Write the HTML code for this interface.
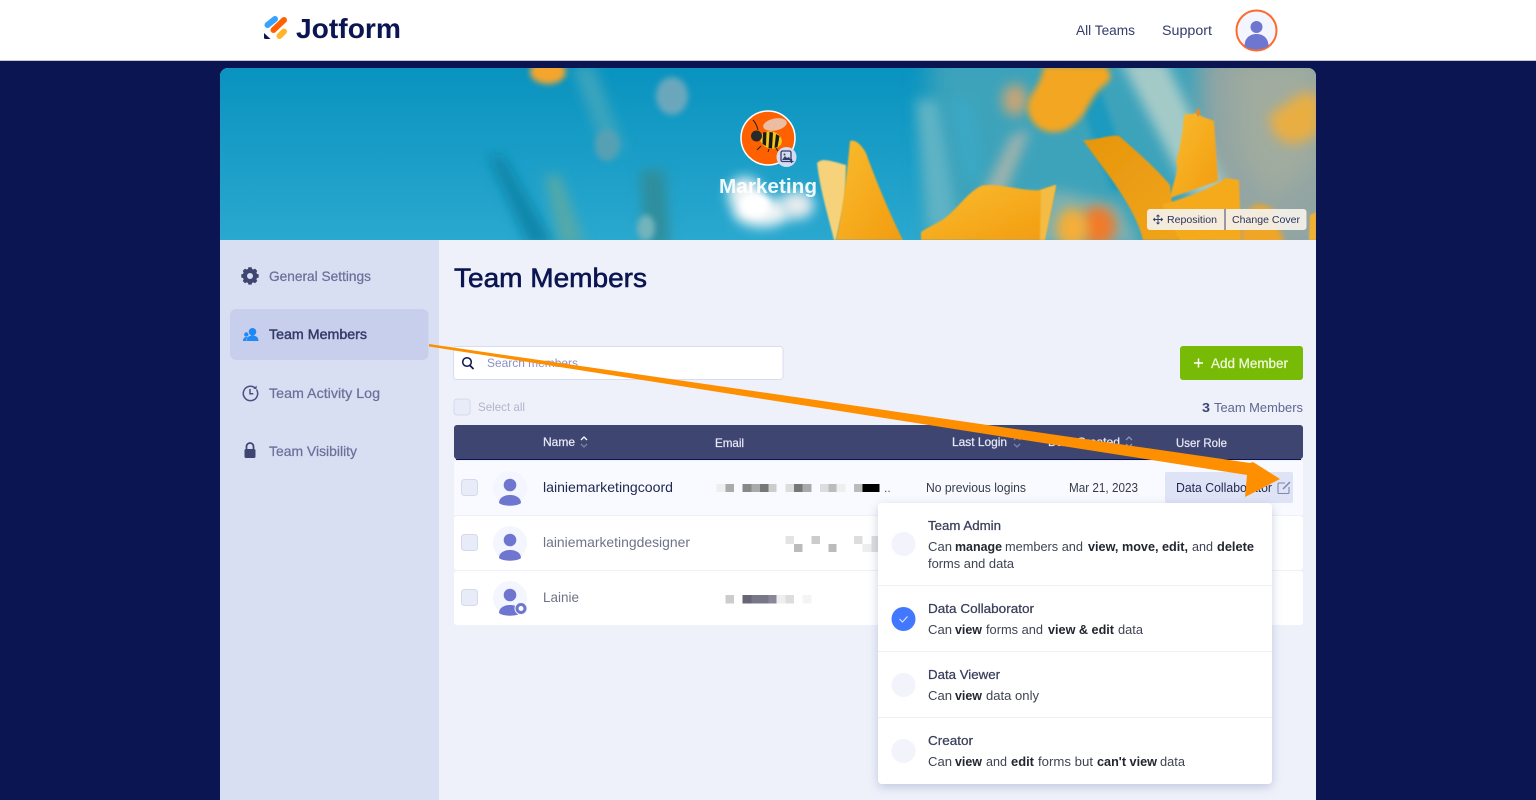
<!DOCTYPE html>
<html lang="en"><head><meta charset="utf-8"><title>Team Members</title>
<style>
html,body{margin:0;padding:0;width:1536px;height:800px;overflow:hidden;background:#0a1551}
svg{display:block;filter:blur(.35px)}
text{font-family:"Liberation Sans",sans-serif;white-space:pre}
.m{stroke-width:.25px}
.b{font-weight:700}
</style></head><body>
<svg xmlns="http://www.w3.org/2000/svg" width="1536" height="800" viewBox="0 0 1536 800">
<defs>
<clipPath id="cv"><path d="M220 240V76a8 8 0 0 1 8-8H1308a8 8 0 0 1 8 8V240Z"/></clipPath>
<filter id="b12" x="-50%" y="-50%" width="200%" height="200%"><feGaussianBlur stdDeviation="12"/></filter>
<filter id="b6" x="-50%" y="-50%" width="200%" height="200%"><feGaussianBlur stdDeviation="6"/></filter>
<filter id="b3" x="-50%" y="-50%" width="200%" height="200%"><feGaussianBlur stdDeviation="3"/></filter>
<filter id="b1" x="-20%" y="-20%" width="140%" height="140%"><feGaussianBlur stdDeviation=".8"/></filter>
<filter id="sh" x="-10%" y="-10%" width="120%" height="125%"><feDropShadow dx="0" dy="3" stdDeviation="5" flood-color="#6b74a8" flood-opacity=".35"/></filter>
<linearGradient id="bg" x1="0" y1="0" x2="0" y2="1"><stop offset="0" stop-color="#0993bf"/><stop offset="1" stop-color="#2aa8cf"/></linearGradient>
<linearGradient id="p1" x1="0" y1="0" x2="1" y2="1"><stop offset="0" stop-color="#f9bb2e"/><stop offset="1" stop-color="#f29c0f"/></linearGradient>
<linearGradient id="p2" x1="0" y1="0" x2="1" y2="1"><stop offset="0" stop-color="#e6960f"/><stop offset="1" stop-color="#f2a516"/></linearGradient>
</defs>

<!-- page -->
<rect width="1536" height="800" fill="#0a1551"/>
<rect width="1536" height="60" fill="#fff"/>
<rect y="60" width="1536" height="1" fill="#c5c7d4"/>

<!-- logo -->
<g stroke-linecap="round" fill="none">
<path d="M267.500 25 275 19" stroke="#38a3ff" stroke-width="6"/>
<path d="M273.500 30 284 20" stroke="#ff6100" stroke-width="6"/>
<path d="M279.500 36 284 31.500" stroke="#ffb629" stroke-width="6"/>
</g>
<path d="M264 33 270.500 39H265.500a1.500 1.500 0 0 1-1.500-1.500Z" fill="#0a1551"/>
<text x="296" y="38" font-size="28" class="b" fill="#0a1551" textLength="105" lengthAdjust="spacingAndGlyphs">Jotform</text>

<text x="1076" y="35" font-size="13.500" fill="#343c6a" textLength="59" lengthAdjust="spacingAndGlyphs">All Teams</text>
<text x="1162" y="35" font-size="13.500" fill="#343c6a" textLength="50" lengthAdjust="spacingAndGlyphs">Support</text>
<circle cx="1256.500" cy="30.500" r="20" fill="#f3f6ff" stroke="#ff6a2b" stroke-width="2"/>
<circle cx="1256.500" cy="27" r="6" fill="#6f76cf"/>
<path d="M1244.500 46c0-8 5.500-12 12-12s12 4 12 12c-3 2.500-7.500 3.500-12 3.500s-9-1-12-3.500Z" fill="#6f76cf"/>

<!-- panel -->
<path d="M220 800V76a8 8 0 0 1 8-8H1308a8 8 0 0 1 8 8V800Z" fill="#eef1fa"/>
<rect x="220" y="240" width="219" height="560" fill="#d9dff3"/>

<!-- cover -->
<g clip-path="url(#cv)">
<rect x="220" y="68" width="1096" height="172" fill="url(#bg)"/>
<rect x="930" y="50" width="420" height="210" fill="#3ea3bb" filter="url(#b12)"/>
<rect x="1200" y="50" width="140" height="210" fill="#93a5a3" filter="url(#b12)"/>
<path d="M1120 60 1165 60 1230 195 1190 195Z" fill="#a4cac8" filter="url(#b6)"/>
<path d="M1065 60 1090 60 1135 190 1112 190Z" fill="#1d9abf" filter="url(#b3)"/>
<path d="M1235 60 1316 60 1316 160 1270 200 1240 150Z" fill="#a0ac9f" filter="url(#b12)"/>
<path d="M916 100 938 100 958 230 928 230Z" fill="#5fb3c4" filter="url(#b6)"/>
<path d="M952 100 970 100 982 180 965 180Z" fill="#3ba9c6" filter="url(#b6)"/>
<path d="M1012 135 1030 130 1000 205 972 215Z" fill="#9fb3ad" filter="url(#b6)"/>
<path d="M985 215 1060 190 1120 205 1140 245H985Z" fill="#7ab0b2" filter="url(#b6)"/>
<ellipse cx="1015" cy="100" rx="13" ry="16" fill="#c3a578" filter="url(#b6)"/>
<!-- blurred left stems -->
<ellipse cx="548" cy="72" rx="18" ry="12" fill="#f4a52e" filter="url(#b3)"/>
<ellipse cx="672" cy="96" rx="16" ry="19" fill="#6aa7bd" filter="url(#b3)"/>
<path d="M572 66 594 66 625 150 605 155Z" fill="#3ba4bd" filter="url(#b6)"/>
<ellipse cx="607" cy="145" rx="12" ry="16" fill="#57a0b3" filter="url(#b3)"/>
<path d="M488 155 503 155 555 245 528 245Z" fill="#1086aa" filter="url(#b6)"/>
<path d="M545 175 560 175 585 245 560 245Z" fill="#54a9a9" filter="url(#b6)"/>
<path d="M640 170 665 170 670 245 645 245Z" fill="#2e8e9c" filter="url(#b6)"/>
<ellipse cx="646" cy="228" rx="9" ry="13" fill="#72b4bc" filter="url(#b3)"/>
<!-- white blossom -->
<ellipse cx="745" cy="195" rx="17" ry="18" fill="#eef3f3" filter="url(#b6)"/>
<ellipse cx="762" cy="212" rx="28" ry="15" fill="#f2f5f5" filter="url(#b6)"/>
<ellipse cx="797" cy="205" rx="17" ry="14" fill="#e6ecee" filter="url(#b6)"/>
<ellipse cx="755" cy="205" rx="15" ry="12" fill="#fff" filter="url(#b3)"/>
<!-- top blurred flower -->
<path d="M1028 105C1030 92 1040 88 1044 66H1105C1112 72 1112 80 1106 84 1095 92 1090 105 1085 112 1075 128 1060 134 1050 132 1036 130 1027 118 1028 105Z" fill="#f3a622" filter="url(#b3)"/>
<!-- far right blurred -->
<path d="M1271 113C1285 108 1295 92 1312 92L1320 100V130C1310 140 1300 145 1288 143 1275 140 1268 125 1271 113Z" fill="#e9ae42" filter="url(#b6)"/>
<ellipse cx="1098" cy="226" rx="18" ry="20" fill="#f07a2a" filter="url(#b6)"/>
<ellipse cx="1072" cy="228" rx="16" ry="20" fill="#f5ae38" filter="url(#b6)"/>
<!-- left petals -->
<path d="M817 163C822 158 828 160 846 165L845 200 836 240H834C828 215 820 190 817 163Z" fill="#f6d27a" filter="url(#b1)"/>
<path d="M850 141C856 139 862 146 866 153 875 178 890 215 903 240H836C842 215 847 175 850 141Z" fill="url(#p1)" filter="url(#b1)"/>
<!-- middle flower -->
<path d="M921 232C930 226 940 222 945 218 958 208 968 192 981 186 995 182 1025 192 1040 190L1056 185 1052 205 1044 240H921Z" fill="url(#p1)" filter="url(#b1)"/>
<path d="M1041 190 1056 185 1052 205 1045 240H1040Z" fill="#f4bc44" filter="url(#b1)"/>
<!-- right flower -->
<path d="M1083 140C1095 141 1110 134 1119 136 1135 150 1158 170 1170 185L1172 205 1198 240H1143C1135 205 1100 165 1083 140Z" fill="url(#p2)" filter="url(#b1)"/>
<path d="M1184 115C1188 113 1192 115 1196 113 1203 118 1208 118 1214 121L1218 181 1170 198C1172 185 1180 170 1176 161 1180 150 1183 130 1184 115Z" fill="url(#p1)" filter="url(#b1)"/>
<path d="M1196 113 1197 108 1201 112 1198 117Z" fill="#e98a2a"/>
<path d="M1162 205C1175 200 1200 195 1226 178L1239 180 1241 240H1180Z" fill="#f5aa1c" filter="url(#b1)"/>
<path d="M1241 215 1258 204 1272 208 1285 245H1241Z" fill="#f0a528" filter="url(#b3)"/>
<path d="M1310 215 1316 212V240H1309Z" fill="#f3b02e" filter="url(#b1)"/>
</g>

<!-- avatar -->
<circle cx="768" cy="138" r="27" fill="#ff6100" stroke="#fff" stroke-width="1.500"/>
<ellipse cx="775" cy="124.500" rx="12" ry="6" transform="rotate(-12 775 124.500)" fill="#ecbda0"/>
<ellipse cx="771" cy="140" rx="11" ry="8.500" transform="rotate(15 771 140)" fill="#f5c818"/>
<path d="M763 132.500l3.500-.5-.5 14-3.500-2ZM769.500 132l3.500.5-1 16-3.500-.5ZM776 134l3.500 2-2 11-3 1Z" fill="#1a1a1a"/>
<circle cx="756.500" cy="136" r="5.500" fill="#2a2a2a"/>
<path d="M758 130c-1-4-3-8-5-10M761 146l-4 4M769 149l-1 3M776 148l2 3" stroke="#222" stroke-width="1" fill="none"/>
<circle cx="786.500" cy="157" r="10" fill="#d5dcf2"/>
<rect x="781" y="151" width="10" height="10.500" rx="1.500" fill="none" stroke="#343c6a" stroke-width="1.300"/>
<path d="M782 160l3-4 2 2 2-1 2 3Z" fill="#343c6a"/>
<circle cx="784.500" cy="154.500" r="1" fill="#343c6a"/>
<path d="M791.500 159v4M789.500 161.500h4" stroke="#343c6a" stroke-width="1.200"/>
<text x="719" y="193" font-size="20" class="b" fill="#fff" fill-opacity=".92" textLength="98" lengthAdjust="spacingAndGlyphs">Marketing</text>

<!-- cover buttons -->
<rect x="1147" y="209" width="159.500" height="21" rx="3" fill="#f4f1ea" fill-opacity=".93"/>
<rect x="1224.500" y="209" width="1" height="21" fill="#3e4571"/>
<path d="M1158 215v9M1153.500 219.500h9M1156.500 216.500l1.500-1.500 1.500 1.500M1156.500 222.500l1.500 1.500 1.500-1.500M1155 218l-1.500 1.500 1.500 1.500M1161 218l1.500 1.500-1.500 1.500" stroke="#343c6a" stroke-width=".9" fill="none"/>
<text x="1167" y="223" font-size="10.500" fill="#2b325f" textLength="50" lengthAdjust="spacingAndGlyphs">Reposition</text>
<text x="1232" y="223" font-size="10.500" fill="#2b325f" textLength="68" lengthAdjust="spacingAndGlyphs">Change Cover</text>

<!-- sidebar -->
<rect x="230" y="309" width="198.500" height="51" rx="6" fill="#c8cfec"/>
<path fill="#3e4571" transform="translate(50 52.400) scale(.8)" d="M248 268.500h4l.6 2.200 1.700.7 2-1.100 2.800 2.800-1.100 2 .7 1.700 2.200.6v4l-2.200.6-.7 1.700 1.100 2-2.800 2.800-2-1.100-1.700.7-.6 2.200h-4l-.6-2.200-1.700-.7-2 1.100-2.800-2.800 1.100-2-.7-1.700-2.200-.6v-4l2.200-.6.700-1.700-1.100-2 2.800-2.800 2 1.100 1.700-.7Z"/>
<circle cx="250" cy="276" r="3" fill="#d9dff3"/>
<g fill="#1f8af5">
<circle cx="252.500" cy="331.800" r="3.800"/>
<path d="M246.500 341c0-3.800 2.500-5.500 6-5.500s6 1.700 6 5.500Z"/>
<circle cx="246.300" cy="334.500" r="2.200"/>
<path d="M243 341c0-2.300 1.200-4 3.300-4 .6 0 1 .1 1.300.3-1 .9-1.600 2.200-1.600 3.700Z"/>
</g>
<path d="M256.500 389.500a7.200 7.200 0 1 1-1.200-1.400" fill="none" stroke="#4a5180" stroke-width="1.500"/>
<path d="M256.600 385.500v3.500h-3.300Z" fill="#4a5180"/>
<path d="M250 389v4.800h3.300" fill="none" stroke="#4a5180" stroke-width="1.500"/>
<path d="M246.500 449v-2.500a3.500 3.500 0 0 1 7 0V449" fill="none" stroke="#3e4571" stroke-width="1.700"/>
<rect x="244.500" y="449" width="11" height="9" rx="1.500" fill="#3e4571"/>
<text x="269" y="281" font-size="14" fill="#6b7199" stroke="#6b7199" class="m" textLength="102" lengthAdjust="spacingAndGlyphs">General Settings</text>
<text x="269" y="339" font-size="14" fill="#343c6a" stroke="#343c6a" class="m" style="stroke-width:.45px" textLength="98" lengthAdjust="spacingAndGlyphs">Team Members</text>
<text x="269" y="398" font-size="14" fill="#6b7199" stroke="#6b7199" class="m" textLength="111" lengthAdjust="spacingAndGlyphs">Team Activity Log</text>
<text x="269" y="456" font-size="14" fill="#6b7199" stroke="#6b7199" class="m" textLength="88" lengthAdjust="spacingAndGlyphs">Team Visibility</text>

<!-- title -->
<text x="454" y="287" font-size="27" fill="#0a1551" stroke="#0a1551" class="m" style="stroke-width:.6px" textLength="193" lengthAdjust="spacingAndGlyphs">Team Members</text>

<!-- search -->
<rect x="453.500" y="346.500" width="329.500" height="33" rx="3" fill="#fff" stroke="#d8dcf0"/>
<circle cx="467" cy="362" r="4.300" fill="none" stroke="#0a1551" stroke-width="1.500"/>
<path d="M470 365.500l3.500 3.500" stroke="#0a1551" stroke-width="1.700"/>
<text x="487" y="367" font-size="12" fill="#8a90c4" textLength="91" lengthAdjust="spacingAndGlyphs">Search members</text>

<!-- add -->
<rect x="1180" y="346" width="123" height="34" rx="3" fill="#78bb07"/>
<path d="M1194 363h9M1198.500 358.500v9" stroke="#fff" stroke-width="1.500"/>
<text x="1211" y="368" font-size="13.500" fill="#eef8d8" stroke="#eef8d8" class="m" textLength="77" lengthAdjust="spacingAndGlyphs">Add Member</text>

<!-- select -->
<rect x="454" y="399" width="16" height="16" rx="3" fill="#e8ebf8" stroke="#d5d9ee"/>
<text x="478" y="411" font-size="12" fill="#b2b5cc" textLength="47" lengthAdjust="spacingAndGlyphs">Select all</text>
<text x="1202" y="412" font-size="13" class="b" fill="#3e4571" textLength="8" lengthAdjust="spacingAndGlyphs">3</text>
<text x="1214" y="412" font-size="13" fill="#5f6690" textLength="89" lengthAdjust="spacingAndGlyphs">Team Members</text>

<!-- table header -->
<path d="M454 428a3 3 0 0 1 3-3H1300a3 3 0 0 1 3 3V456a3 3 0 0 1-3 3H457a3 3 0 0 1-3-3Z" fill="#3e4571"/>
<rect x="456" y="459" width="845" height="1" fill="#0a1551"/>
<g font-size="12" fill="#e6e8f5" stroke="#e6e8f5" class="m">
<text x="543" y="446" textLength="32" lengthAdjust="spacingAndGlyphs">Name</text>
<text x="715" y="447" textLength="29" lengthAdjust="spacingAndGlyphs">Email</text>
<text x="952" y="446" textLength="55" lengthAdjust="spacingAndGlyphs">Last Login</text>
<text x="1048" y="446" textLength="72" lengthAdjust="spacingAndGlyphs">Date Created</text>
<text x="1176" y="447" textLength="51" lengthAdjust="spacingAndGlyphs">User Role</text>
</g>
<g fill="none" stroke-width="1.300">
<path d="M581 440l3-3 3 3" stroke="#fff"/><path d="M581 444l3 3 3-3" stroke="#7c82a8"/>
<path d="M1014 440l3-3 3 3" stroke="#7c82a8"/><path d="M1014 444l3 3 3-3" stroke="#7c82a8"/>
<path d="M1126 440l3-3 3 3" stroke="#8f95b8"/><path d="M1126 444l3 3 3-3" stroke="#8f95b8"/>
</g>

<!-- rows -->
<rect x="454" y="461" width="849" height="54" fill="#f8faff"/>
<rect x="454" y="516" width="849" height="54" rx="3" fill="#fff"/>
<rect x="454" y="571" width="849" height="54" rx="3" fill="#fff"/>
<g fill="#e8ebf8" stroke="#d5d9ee">
<rect x="461.500" y="479.500" width="16" height="16" rx="3"/>
<rect x="461.500" y="534.500" width="16" height="16" rx="3"/>
<rect x="461.500" y="589.500" width="16" height="16" rx="3"/>
</g>
<g fill="#f3f6ff"><circle cx="510" cy="488" r="17"/><circle cx="510" cy="543" r="17"/><circle cx="510" cy="598" r="17"/></g>
<g fill="#6f76cf">
<circle cx="510" cy="485" r="6.300"/><path d="M499 503c0-5 5-8 11-8s11 3 11 8c-2 1.700-6 2.700-11 2.700s-9-1-11-2.700Z"/>
<circle cx="510" cy="540" r="6.300"/><path d="M499 558c0-5 5-8 11-8s11 3 11 8c-2 1.700-6 2.700-11 2.700s-9-1-11-2.700Z"/>
<circle cx="510" cy="595" r="6.300"/><path d="M499 613c0-5 5-8 11-8s11 3 11 8c-2 1.700-6 2.700-11 2.700s-9-1-11-2.700Z"/>
</g>
<circle cx="521" cy="608.500" r="6" fill="#6f76cf" stroke="#f3f6ff"/>
<circle cx="521" cy="608.500" r="2.500" fill="#fff"/>
<text x="543" y="492" font-size="14" fill="#23284f" textLength="130" lengthAdjust="spacingAndGlyphs">lainiemarketingcoord</text>
<text x="543" y="547" font-size="14" fill="#6f7387" textLength="147" lengthAdjust="spacingAndGlyphs">lainiemarketingdesigner</text>
<text x="543" y="602" font-size="14" fill="#6f7387" textLength="36" lengthAdjust="spacingAndGlyphs">Lainie</text>

<!-- blurred emails -->
<g shape-rendering="crispEdges">
<rect x="716.700" y="484" width="8.600" height="8" fill="#eee"/><rect x="725.300" y="484" width="8.700" height="8" fill="#aaa"/>
<rect x="742.700" y="484" width="8.600" height="8" fill="#888"/><rect x="751.300" y="484" width="8.700" height="8" fill="#aaa"/><rect x="760" y="484" width="8.300" height="8" fill="#777"/><rect x="768.300" y="484" width="8.400" height="8" fill="#ccc"/>
<rect x="785.300" y="484" width="8.700" height="8" fill="#ddd"/><rect x="794" y="484" width="8.700" height="8" fill="#777"/><rect x="802.700" y="484" width="8.600" height="8" fill="#aaa"/>
<rect x="820" y="484" width="8.300" height="8" fill="#ddd"/><rect x="828.300" y="484" width="8.400" height="8" fill="#bbb"/><rect x="836.700" y="484" width="8.600" height="8" fill="#eee"/>
<rect x="854" y="484" width="8.700" height="8" fill="#bbb"/><rect x="862.700" y="484" width="16.600" height="8" fill="#000"/>
<rect x="785.300" y="536" width="8.700" height="8" fill="#e3e3e3"/><rect x="794" y="544" width="8.700" height="8" fill="#bbb"/><rect x="811.300" y="536" width="8.700" height="8" fill="#ccc"/><rect x="828.300" y="544" width="8.400" height="8" fill="#bbb"/><rect x="854" y="536" width="8.700" height="8" fill="#ddd"/><rect x="862.700" y="544" width="8.600" height="8" fill="#eee"/><rect x="871.300" y="536" width="8" height="16" fill="#ddd"/>
<rect x="725.300" y="595" width="8.700" height="8.500" fill="#ccc"/><rect x="742.700" y="595" width="8.600" height="8.500" fill="#667"/><rect x="751.300" y="595" width="17" height="8.500" fill="#778"/><rect x="768.300" y="595" width="8.400" height="8.500" fill="#889"/><rect x="776.700" y="595" width="8.600" height="8.500" fill="#eee"/><rect x="785.300" y="595" width="8.700" height="8.500" fill="#ddd"/><rect x="802.700" y="595" width="8.600" height="8.500" fill="#f4f4f4"/>
</g>
<text x="884" y="492" font-size="12" fill="#555">..</text>

<text x="926" y="492" font-size="12.500" fill="#343c4a" textLength="100" lengthAdjust="spacingAndGlyphs">No previous logins</text>
<text x="1069" y="492" font-size="12.500" fill="#343c4a" textLength="69" lengthAdjust="spacingAndGlyphs">Mar 21, 2023</text>
<rect x="1165" y="472" width="128" height="31" rx="2" fill="#dfe3f6"/>
<text x="1176" y="492" font-size="12.500" fill="#23284f" textLength="96" lengthAdjust="spacingAndGlyphs">Data Collaborator</text>
<path d="M1285 483h-6a1 1 0 0 0-1 1v8.500a1 1 0 0 0 1 1h9a1 1 0 0 0 1-1V487" fill="none" stroke="#7f86b0" stroke-width="1.100"/>
<path d="M1283 489l7-7" stroke="#7f86b0" stroke-width="1.500"/>

<!-- dropdown -->
<rect x="878" y="503" width="394" height="281" rx="4" fill="#fff" filter="url(#sh)"/>
<g fill="#eef0f6"><rect x="878" y="585" width="394" height="1"/><rect x="878" y="651" width="394" height="1"/><rect x="878" y="717" width="394" height="1"/></g>
<g fill="#f2f3fb"><circle cx="903.500" cy="544" r="12"/><circle cx="903.500" cy="685" r="12"/><circle cx="903.500" cy="751" r="12"/></g>
<circle cx="903.500" cy="619" r="12" fill="#4277ff"/>
<path d="M899.500 619l3 3 5-5.500" fill="none" stroke="#dfe7ff" stroke-width="1.100"/>

<g font-size="12.500" fill="#3a3f5a" stroke="#3a3f5a" class="m">
<text x="928" y="530" textLength="73" lengthAdjust="spacingAndGlyphs">Team Admin</text>
<text x="928" y="613" textLength="106" lengthAdjust="spacingAndGlyphs">Data Collaborator</text>
<text x="928" y="679" textLength="72" lengthAdjust="spacingAndGlyphs">Data Viewer</text>
<text x="928" y="745" textLength="45" lengthAdjust="spacingAndGlyphs">Creator</text>
</g>
<g font-size="12.500" fill="#3f4452">
<text x="928" y="551" textLength="24" lengthAdjust="spacingAndGlyphs">Can</text>
<text x="1005" y="551" textLength="78" lengthAdjust="spacingAndGlyphs">members and</text>
<text x="1192" y="551" textLength="21" lengthAdjust="spacingAndGlyphs">and</text>
<text x="928" y="568" textLength="86" lengthAdjust="spacingAndGlyphs">forms and data</text>
<text x="928" y="634" textLength="24" lengthAdjust="spacingAndGlyphs">Can</text>
<text x="986" y="634" textLength="57" lengthAdjust="spacingAndGlyphs">forms and</text>
<text x="1118" y="634" textLength="25" lengthAdjust="spacingAndGlyphs">data</text>
<text x="928" y="700" textLength="24" lengthAdjust="spacingAndGlyphs">Can</text>
<text x="986" y="700" textLength="53" lengthAdjust="spacingAndGlyphs">data only</text>
<text x="928" y="766" textLength="24" lengthAdjust="spacingAndGlyphs">Can</text>
<text x="986" y="766" textLength="21" lengthAdjust="spacingAndGlyphs">and</text>
<text x="1038" y="766" textLength="55" lengthAdjust="spacingAndGlyphs">forms but</text>
<text x="1160" y="766" textLength="25" lengthAdjust="spacingAndGlyphs">data</text>
</g>
<g font-size="12.500" fill="#23262f" class="b">
<text x="955" y="551" textLength="47" lengthAdjust="spacingAndGlyphs">manage</text>
<text x="1088" y="551" textLength="100" lengthAdjust="spacingAndGlyphs">view, move, edit,</text>
<text x="1217" y="551" textLength="37" lengthAdjust="spacingAndGlyphs">delete</text>
<text x="955" y="634" textLength="27" lengthAdjust="spacingAndGlyphs">view</text>
<text x="1048" y="634" textLength="66" lengthAdjust="spacingAndGlyphs">view &amp; edit</text>
<text x="955" y="700" textLength="27" lengthAdjust="spacingAndGlyphs">view</text>
<text x="955" y="766" textLength="27" lengthAdjust="spacingAndGlyphs">view</text>
<text x="1011" y="766" textLength="23" lengthAdjust="spacingAndGlyphs">edit</text>
<text x="1097" y="766" textLength="60" lengthAdjust="spacingAndGlyphs">can't view</text>
</g>

<!-- arrow -->
<path d="M429 344 1250 463 1253 462 1280 479 1245 497 1247 475 429 346.500Z" fill="#fd8f00"/>
</svg>
</body></html>
